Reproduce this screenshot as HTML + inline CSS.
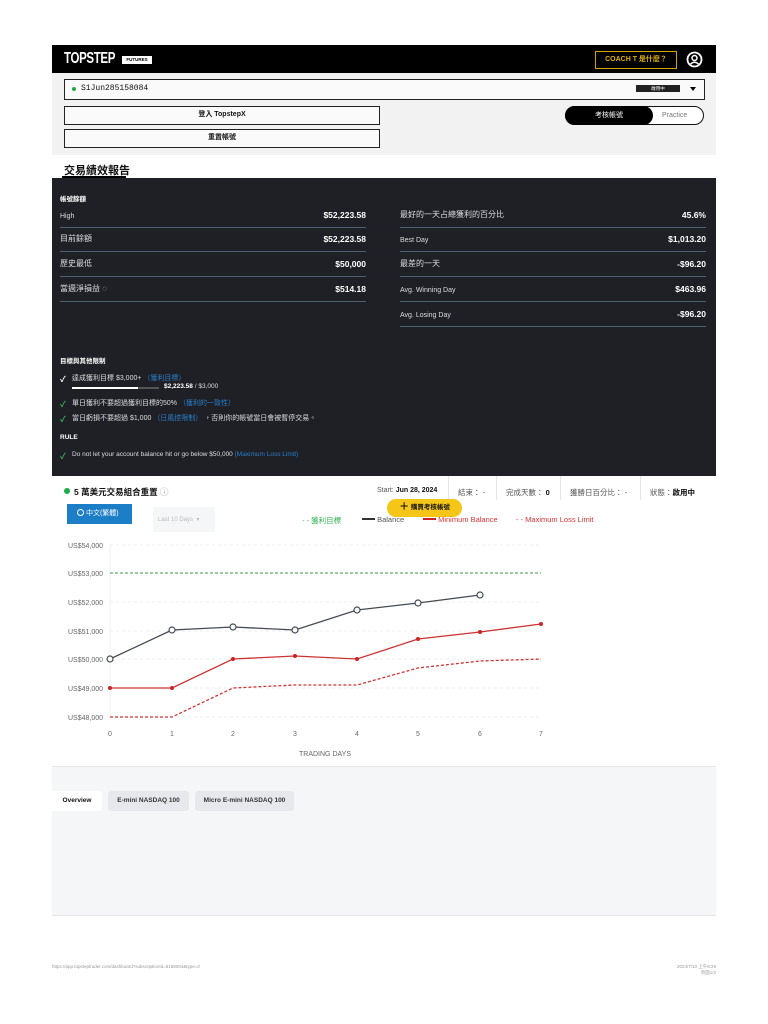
<!DOCTYPE html>
<html><head><meta charset="utf-8"><style>
*{box-sizing:border-box;margin:0;padding:0}
body{width:768px;height:1024px;background:#fff;font-family:"Liberation Sans","Noto Sans CJK TC",sans-serif;position:relative;overflow:hidden;color:#111}
.a{position:absolute}
.dk{color:#ddd;font-size:8px}
.row{position:absolute;border-bottom:1px solid #4f6070;height:24px}
.row span{position:absolute;bottom:7px}
.row .v{right:0;font-weight:bold;color:#fff;font-size:8.5px}
.lk{color:#2a7fc9}
.ck{color:#3cb35a;font-size:8px;position:absolute;left:60px;font-weight:bold}
</style></head><body>
<div class="a" style="left:52px;top:45px;width:664px;height:28px;background:#000"></div>
<div class="a" style="left:64px;top:50px;color:#fff;font-weight:bold;font-size:16px;letter-spacing:-0.5px;transform:scaleX(0.72);transform-origin:left;font-family:'Liberation Sans Narrow','Liberation Sans',sans-serif">TOPSTEP</div>
<div class="a" style="left:122px;top:56px;width:30px;height:8px;background:#fff;color:#000;font-size:4.5px;font-weight:bold;text-align:center;line-height:8px">FUTURES</div>
<div class="a" style="left:595px;top:51px;width:82px;height:18px;border:1px solid #d4a400;color:#e0b000;font-size:7px;text-align:center;line-height:16px;font-weight:bold">COACH T 是什麼？</div>
<svg class="a" style="left:686px;top:51px" width="17" height="17"><circle cx="8.5" cy="8.5" r="7" fill="none" stroke="#fff" stroke-width="1.8"/><circle cx="8.5" cy="7" r="2.5" fill="none" stroke="#fff" stroke-width="1.5"/><path d="M4.5 13 Q8.5 9.5 12.5 13" fill="none" stroke="#fff" stroke-width="1.5"/></svg>
<div class="a" style="left:52px;top:73px;width:664px;height:82px;background:#f2f2f2"></div>
<div class="a" style="left:64px;top:79px;width:641px;height:21px;border:1.5px solid #222;background:#fafafa"></div>
<div class="a" style="left:72px;top:87px;width:4px;height:4px;border-radius:50%;background:#1eaa4a"></div>
<div class="a" style="left:81px;top:84px;font-size:8px;font-family:'Liberation Mono',monospace">S1Jun285158084</div>
<div class="a" style="left:636px;top:85px;width:44px;height:7px;background:#222;color:#fff;font-size:4.5px;text-align:center;line-height:7px">啟用中</div>
<div class="a" style="left:690px;top:87px;border:3px solid transparent;border-top:4px solid #000"></div>
<div class="a" style="left:64px;top:106px;width:316px;height:19px;border:1.5px solid #222;background:#fafafa;font-size:7px;font-weight:bold;text-align:center;line-height:16px">登入 TopstepX</div>
<div class="a" style="left:64px;top:129px;width:316px;height:19px;border:1.5px solid #222;background:#fafafa;font-size:7px;font-weight:bold;text-align:center;line-height:16px">重置帳號</div>
<div class="a" style="left:565px;top:106px;width:139px;height:19px;border:1.5px solid #111;border-radius:10px;background:#fff"></div>
<div class="a" style="left:565px;top:106px;width:88px;height:19px;border-radius:10px;background:#000;color:#fff;font-size:7px;text-align:center;line-height:19px">考核帳號</div>
<div class="a" style="left:662px;top:112px;font-size:7px;color:#777">Practice</div>
<div class="a" style="left:64px;top:162px;font-size:11px;font-weight:bold">交易績效報告</div>
<div class="a" style="left:62px;top:176px;width:64px;height:3px;background:#000"></div>
<div class="a" style="left:52px;top:178px;width:664px;height:298px;background:#1e2026"></div>
<div class="a dk" style="left:60px;top:193px;font-size:6.5px;font-weight:bold;color:#fff">帳號餘額</div>
<div class="row" style="left:60px;top:204px;width:306px"><span class="dk" style="font-size:7px">High</span><span class="v">$52,223.58</span></div>
<div class="row" style="left:60px;top:228px;width:306px"><span class="dk">目前餘額</span><span class="v">$52,223.58</span></div>
<div class="row" style="left:60px;top:253px;width:306px"><span class="dk">歷史最低</span><span class="v">$50,000</span></div>
<div class="row" style="left:60px;top:278px;width:306px"><span class="dk">當週淨損益 ◌</span><span class="v">$514.18</span></div>
<div class="row" style="left:400px;top:204px;width:306px"><span class="dk">最好的一天占總獲利的百分比</span><span class="v">45.6%</span></div>
<div class="row" style="left:400px;top:228px;width:306px"><span class="dk" style="font-size:7px">Best Day</span><span class="v">$1,013.20</span></div>
<div class="row" style="left:400px;top:253px;width:306px"><span class="dk">最差的一天</span><span class="v">-$96.20</span></div>
<div class="row" style="left:400px;top:278px;width:306px"><span class="dk" style="font-size:7px">Avg. Winning Day</span><span class="v">$463.96</span></div>
<div class="row" style="left:400px;top:303px;width:306px"><span class="dk" style="font-size:7px">Avg. Losing Day</span><span class="v">-$96.20</span></div>
<div class="a dk" style="left:60px;top:355px;font-size:6.5px;font-weight:bold;color:#fff">目標與其他限制</div>
<div class="a" style="left:60px;top:374px;color:#fff;font-size:8px;font-weight:bold">✓</div>
<div class="a dk" style="left:72px;top:373px;font-size:7px">達成獲利目標 $3,000+ <span class="lk">（獲利目標）</span></div>
<div class="a" style="left:72px;top:387px;width:87px;height:2px;background:#555"></div>
<div class="a" style="left:72px;top:387px;width:66px;height:2px;background:#fff"></div>
<div class="a dk" style="left:164px;top:383px;font-size:6.5px"><b style="color:#fff">$2,223.58</b> / $3,000</div>
<div class="ck" style="top:399px">✓</div>
<div class="a dk" style="left:72px;top:398px;font-size:7px">單日獲利不要超過獲利目標的50% <span class="lk">（獲利的一致性）</span></div>
<div class="ck" style="top:414px">✓</div>
<div class="a dk" style="left:72px;top:413px;font-size:7px">當日虧損不要超過 $1,000 <span class="lk">（日風控限制）</span> ，否則你的帳號當日會被暫停交易。</div>
<div class="a dk" style="left:60px;top:434px;font-size:6.5px;font-weight:bold;color:#fff">RULE</div>
<div class="ck" style="top:451px">✓</div>
<div class="a dk" style="left:72px;top:451px;font-size:6.5px">Do not let your account balance hit or go below $50,000 <span class="lk">(Maximum Loss Limit)</span></div>
<div class="a" style="left:64px;top:488px;width:6px;height:6px;border-radius:50%;background:#1eaa4a"></div>
<div class="a" style="left:74px;top:486px;font-size:8.5px;font-weight:bold">5 萬美元交易組合重置 <span style="color:#999;font-weight:normal">ⓘ</span></div>
<div class="a" style="left:377px;top:487px;font-size:7px;color:#555">Start: <b style="color:#111">Jun 28, 2024</b></div>
<div class="a" style="left:448px;top:476px;width:1px;height:24px;background:#e5e5e5"></div>
<div class="a" style="left:458px;top:487px;font-size:7.5px;color:#555">結束： -</div>
<div class="a" style="left:496px;top:476px;width:1px;height:24px;background:#e5e5e5"></div>
<div class="a" style="left:506px;top:487px;font-size:7.5px;color:#555">完成天數： <b style="color:#111">0</b></div>
<div class="a" style="left:560px;top:476px;width:1px;height:24px;background:#e5e5e5"></div>
<div class="a" style="left:570px;top:487px;font-size:7.5px;color:#555">獲勝日百分比： -</div>
<div class="a" style="left:640px;top:476px;width:1px;height:24px;background:#e5e5e5"></div>
<div class="a" style="left:650px;top:487px;font-size:7.5px;color:#555">狀態：<b style="color:#111">啟用中</b></div>
<div class="a" style="left:67px;top:504px;width:65px;height:20px;background:#1c7ec6;color:#fff;font-size:7px;line-height:20px;padding-left:10px"><span style="display:inline-block;width:7px;height:7px;border:1.5px solid #fff;border-radius:50%;vertical-align:-1px"></span> 中文(繁體)</div>
<div class="a" style="left:153px;top:507px;width:62px;height:25px;background:#f5f6f8;color:#bbb;font-size:6px;padding:9px 0 0 5px">Last 10 Days &nbsp;▾</div>
<div class="a" style="left:387px;top:499px;width:75px;height:18px;background:#f5c518;border-radius:9px;font-size:6.5px;font-weight:bold;line-height:18px;text-align:center"><span style="font-size:10px;vertical-align:-1px">＋</span> 購買考核帳號</div>
<div class="a" style="left:302px;top:515px;font-size:7.5px;color:#3cb35a">- - 獲利目標</div>
<div class="a" style="left:362px;top:515px;font-size:7.5px;color:#555"><span style="display:inline-block;width:13px;height:2px;background:#333;vertical-align:2px"></span> Balance</div>
<div class="a" style="left:423px;top:515px;font-size:7.5px;color:#d33"><span style="display:inline-block;width:13px;height:2px;background:#c22;vertical-align:2px"></span> Minimum Balance</div>
<div class="a" style="left:516px;top:515px;font-size:7.5px;color:#d33">- - Maximum Loss Limit</div>
<svg class="a" style="left:0;top:0" width="768" height="770">
<g font-size="7" fill="#666" text-anchor="end" font-family="Liberation Sans">
<text x="103" y="548">US$54,000</text><text x="103" y="576">US$53,000</text><text x="103" y="605">US$52,000</text><text x="103" y="634">US$51,000</text><text x="103" y="662">US$50,000</text><text x="103" y="691">US$49,000</text><text x="103" y="720">US$48,000</text></g>
<g font-size="7" fill="#666" text-anchor="middle" font-family="Liberation Sans">
<text x="110" y="736">0</text><text x="172" y="736">1</text><text x="233" y="736">2</text><text x="295" y="736">3</text><text x="357" y="736">4</text><text x="418" y="736">5</text><text x="480" y="736">6</text><text x="541" y="736">7</text>
<text x="325" y="756">TRADING DAYS</text></g>
<line x1="110" y1="545" x2="110" y2="717" stroke="#f0f0f0"/>
<g stroke="#eee" stroke-dasharray="3,3"><line x1="110" y1="545" x2="541" y2="545"/><line x1="110" y1="602" x2="541" y2="602"/><line x1="110" y1="631" x2="541" y2="631"/><line x1="110" y1="659" x2="541" y2="659"/><line x1="110" y1="688" x2="541" y2="688"/><line x1="110" y1="717" x2="541" y2="717"/></g>
<line x1="110" y1="573" x2="541" y2="573" stroke="#3a9a4a" stroke-dasharray="3,2"/>
<polyline points="110,717 172,717 233,688 295,685 357,685 418,668 480,661 541,659" fill="none" stroke="#c33" stroke-width="1.3" stroke-dasharray="3,2"/>
<polyline points="110,688 172,688 233,659 295,656 357,659 418,639 480,632 541,624" fill="none" stroke="#c33" stroke-width="1.3"/>
<g fill="#c22"><circle cx="110" cy="688" r="2"/><circle cx="172" cy="688" r="2"/><circle cx="233" cy="659" r="2"/><circle cx="295" cy="656" r="2"/><circle cx="357" cy="659" r="2"/><circle cx="418" cy="639" r="2"/><circle cx="480" cy="632" r="2"/><circle cx="541" cy="624" r="2"/></g>
<polyline points="110,659 172,630 233,627 295,630 357,610 418,603 480,595" fill="none" stroke="#444a55" stroke-width="1.3"/>
<g fill="#fff" stroke="#444a55" stroke-width="1.2"><circle cx="110" cy="659" r="3"/><circle cx="172" cy="630" r="3"/><circle cx="233" cy="627" r="3"/><circle cx="295" cy="630" r="3"/><circle cx="357" cy="610" r="3"/><circle cx="418" cy="603" r="3"/><circle cx="480" cy="595" r="3"/></g>
</svg>
<div class="a" style="left:52px;top:766px;width:664px;height:150px;background:#f5f6f8;border-top:1px solid #e8e8e8;border-bottom:1px solid #e5e6ea"></div>
<div class="a" style="left:52px;top:791px;width:50px;height:20px;background:#fff;border-radius:0 3px 3px 0;font-size:6.5px;font-weight:bold;line-height:20px;text-align:center">Overview</div>
<div class="a" style="left:108px;top:791px;width:81px;height:20px;background:#e6e8eb;border-radius:3px;font-size:6.5px;font-weight:bold;line-height:20px;text-align:center;color:#333">E-mini NASDAQ 100</div>
<div class="a" style="left:195px;top:791px;width:99px;height:20px;background:#e6e8eb;border-radius:3px;font-size:6.5px;font-weight:bold;line-height:20px;text-align:center;color:#333">Micro E-mini NASDAQ 100</div>
<div class="a" style="left:52px;top:964px;font-size:4.5px;color:#999">https://app.topsteptrader.com/dashboard?subscriptionId=5158084&amp;type=2</div>
<div class="a" style="left:668px;top:964px;font-size:4.5px;color:#999;text-align:right;width:48px">2024/7/10 上午6:29<br>頁面1/2</div>
</body></html>
